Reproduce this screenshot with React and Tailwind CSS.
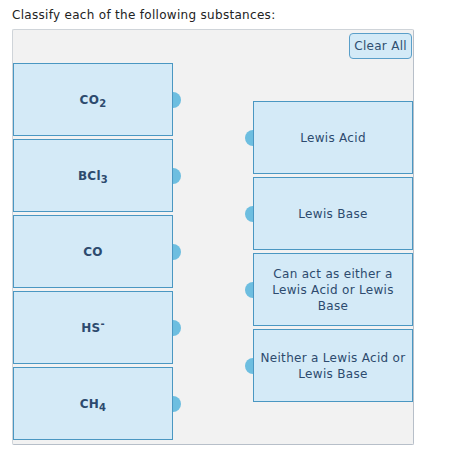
import React from 'react'

// Substances on the left, categories on the right
const substances = [
  { id: 'co2', label: <>CO<sub className="text-[10px] relative top-[3px]">2</sub></> },
  { id: 'bcl3', label: <>BCl<sub className="text-[10px] relative top-[3px]">3</sub></> },
  { id: 'co', label: <>CO</> },
  { id: 'hs', label: <>HS<sup className="text-[10px] relative -top-[5px]">-</sup></> },
  { id: 'ch4', label: <>CH<sub className="text-[10px] relative top-[3px]">4</sub></> },
]

const categories = [
  'Lewis Acid',
  'Lewis Base',
  'Can act as either a Lewis Acid or Lewis Base',
  'Neither a Lewis Acid or Lewis Base',
]

// Half-hidden connector dot sitting on the card edge
const Knob = ({ side }) => (
  <span
    className={`absolute top-1/2 -translate-y-1/2 w-[16px] h-[16px] rounded-full bg-[#6dbee0]
                ${side === 'right' ? '-right-2' : '-left-2'}`}
  />
)

const Card = ({ side, bold, children }) => (
  <div className="relative w-[160px] h-[73px]">
    <Knob side={side} />
    <div className={`relative w-full h-full bg-[#d4eaf7] border border-[#4a97c2]
                     flex items-center justify-center text-center px-1 leading-[16px]
                     ${bold ? 'font-bold' : ''}`}>
      <span>{children}</span>
    </div>
  </div>
)

const App = () => {
  return (
    <div className="w-[473px] h-[468px] bg-white text-[12px] tracking-[0.3px] text-[#2d4a6e]
                    font-['DejaVu_Sans','Verdana',sans-serif] px-3 pt-[7px]">
      <p className="leading-[16px] text-[#222] mb-[6px]">
        Classify each of the following substances:
      </p>

      {/* Drag-and-drop board */}
      <div className="w-[402px] bg-[#f2f2f2] border border-[#cfd4d9] border-b-[#b7bfc9] border-r-[#b7bfc9]
                      rounded-[2px] pb-1">
        <div className="flex justify-end pt-[3px] pr-px">
          <button className="h-[26px] px-1 rounded-[4px] bg-[#d3eaf7] border border-[#5a9fc9]
                             text-[#2f4f70] leading-[16px]">
            Clear All
          </button>
        </div>

        <div className="flex justify-between mt-1">
          <div className="flex flex-col gap-[3px]">
            {substances.map((s) => (
              <Card key={s.id} side="right" bold>{s.label}</Card>
            ))}
          </div>

          <div className="flex flex-col gap-[3px] mt-[38px]">
            {categories.map((c) => (
              <Card key={c} side="left">{c}</Card>
            ))}
          </div>
        </div>
      </div>
    </div>
  )
}

export default App
